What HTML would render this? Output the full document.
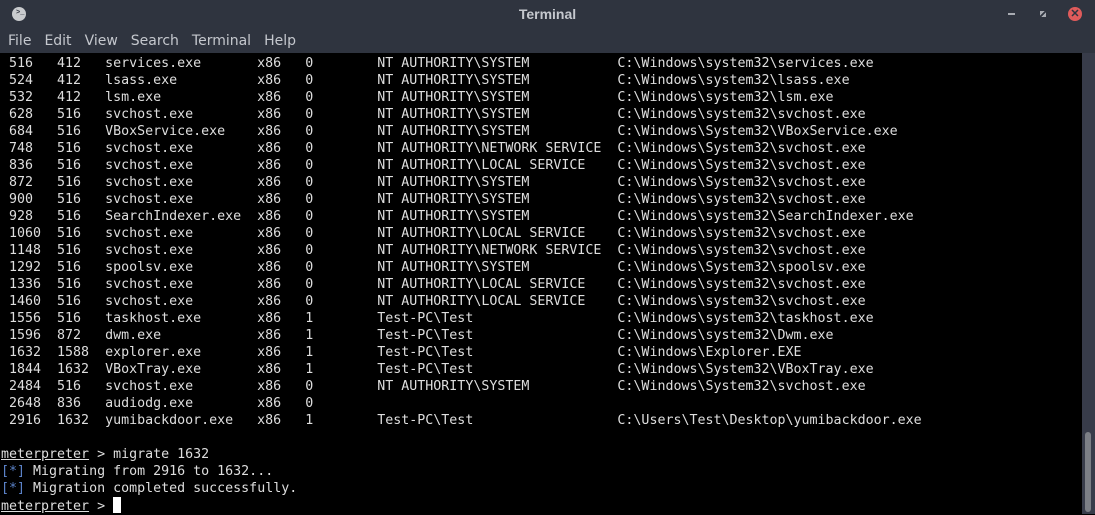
<!DOCTYPE html>
<html><head><style>
html,body{margin:0;padding:0;background:#000;width:1095px;height:514px;overflow:hidden}
.tb{position:absolute;left:0;top:0;width:1095px;height:53px;background:#2f343f}
.title{position:absolute;top:6px;width:1095px;text-align:center;color:#c5c8ce;font:bold 14px "Liberation Sans",sans-serif}
.menu{position:absolute;top:33px;left:8px;color:#c5c8ce;font:14px "DejaVu Sans","Liberation Sans",sans-serif;word-spacing:0}
.menu span{margin-right:13px}
.term{position:absolute;left:1px;top:55px;color:#dedede;font:13.3px/17px "DejaVu Sans Mono","Liberation Mono",monospace;white-space:pre;letter-spacing:0}
.b{color:#5b82c8}
u{text-decoration:underline}
.sb{position:absolute;left:1082px;top:53px;width:13px;height:461px;background:#383c4a}
.th{position:absolute;left:1085px;top:432px;width:6px;height:80px;background:#7c7f86;border-radius:3px}
.cur{display:inline-block;width:8px;height:16px;background:#fff;vertical-align:-3px}
</style></head><body>
<div class="tb">
<div style="position:absolute;left:12px;top:7px;width:14px;height:14px;border-radius:50%;background:#c9cbce"></div>
<div style="position:absolute;left:16px;top:9px;font:bold 7px monospace;color:#2f343f">&gt;_</div>
<div class="title">Terminal</div>
<div style="position:absolute;left:1008px;top:13px;width:7px;height:2px;background:#a8abb2"></div>
<div style="position:absolute;left:1040px;top:11px;width:6px;height:6px;border:0;background:linear-gradient(135deg,transparent 40%,#2f343f 40%,#2f343f 60%,transparent 60%),#a8abb2"></div>
<div style="position:absolute;left:1068px;top:7px;width:14px;height:14px;border-radius:50%;background:#e05b5b;color:#2f343f;font:bold 11px/14px sans-serif;text-align:center">✕</div>
<div class="menu"><span>File</span><span>Edit</span><span>View</span><span>Search</span><span>Terminal</span><span>Help</span></div>
</div>
<div class="term"> 516   412   services.exe       x86   0        NT AUTHORITY\SYSTEM           C:\Windows\system32\services.exe
 524   412   lsass.exe          x86   0        NT AUTHORITY\SYSTEM           C:\Windows\system32\lsass.exe
 532   412   lsm.exe            x86   0        NT AUTHORITY\SYSTEM           C:\Windows\system32\lsm.exe
 628   516   svchost.exe        x86   0        NT AUTHORITY\SYSTEM           C:\Windows\system32\svchost.exe
 684   516   VBoxService.exe    x86   0        NT AUTHORITY\SYSTEM           C:\Windows\System32\VBoxService.exe
 748   516   svchost.exe        x86   0        NT AUTHORITY\NETWORK SERVICE  C:\Windows\System32\svchost.exe
 836   516   svchost.exe        x86   0        NT AUTHORITY\LOCAL SERVICE    C:\Windows\System32\svchost.exe
 872   516   svchost.exe        x86   0        NT AUTHORITY\SYSTEM           C:\Windows\System32\svchost.exe
 900   516   svchost.exe        x86   0        NT AUTHORITY\SYSTEM           C:\Windows\system32\svchost.exe
 928   516   SearchIndexer.exe  x86   0        NT AUTHORITY\SYSTEM           C:\Windows\system32\SearchIndexer.exe
 1060  516   svchost.exe        x86   0        NT AUTHORITY\LOCAL SERVICE    C:\Windows\system32\svchost.exe
 1148  516   svchost.exe        x86   0        NT AUTHORITY\NETWORK SERVICE  C:\Windows\system32\svchost.exe
 1292  516   spoolsv.exe        x86   0        NT AUTHORITY\SYSTEM           C:\Windows\System32\spoolsv.exe
 1336  516   svchost.exe        x86   0        NT AUTHORITY\LOCAL SERVICE    C:\Windows\system32\svchost.exe
 1460  516   svchost.exe        x86   0        NT AUTHORITY\LOCAL SERVICE    C:\Windows\system32\svchost.exe
 1556  516   taskhost.exe       x86   1        Test-PC\Test                  C:\Windows\system32\taskhost.exe
 1596  872   dwm.exe            x86   1        Test-PC\Test                  C:\Windows\system32\Dwm.exe
 1632  1588  explorer.exe       x86   1        Test-PC\Test                  C:\Windows\Explorer.EXE
 1844  1632  VBoxTray.exe       x86   1        Test-PC\Test                  C:\Windows\System32\VBoxTray.exe
 2484  516   svchost.exe        x86   0        NT AUTHORITY\SYSTEM           C:\Windows\System32\svchost.exe
 2648  836   audiodg.exe        x86   0
 2916  1632  yumibackdoor.exe   x86   1        Test-PC\Test                  C:\Users\Test\Desktop\yumibackdoor.exe

<u>meterpreter</u> &gt; migrate 1632
<span class="b">[*]</span> Migrating from 2916 to 1632...
<span class="b">[*]</span> Migration completed successfully.
<u>meterpreter</u> &gt; <span class="cur"></span></div>
<div class="sb"></div><div class="th"></div>
</body></html>
